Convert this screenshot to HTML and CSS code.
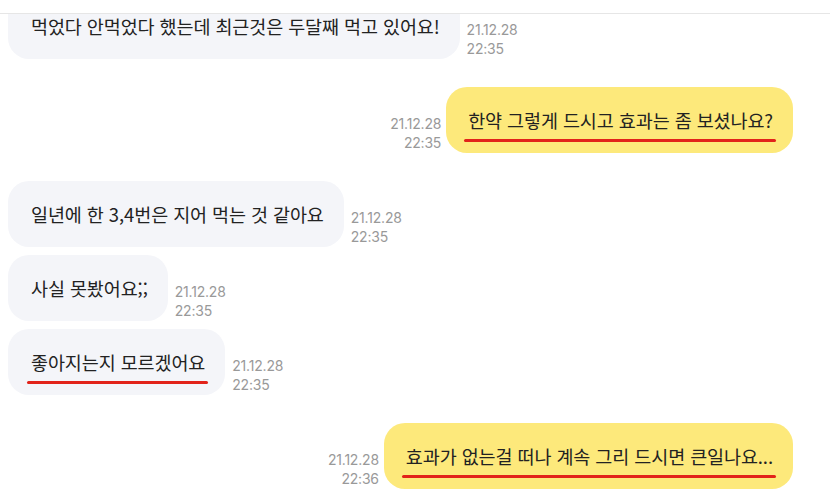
FILE: index.html
```html
<!DOCTYPE html>
<html lang="ko">
<head>
<meta charset="utf-8">
<link rel="stylesheet" href="styles.css">
</head>
<body>
<div class="topbar"></div>
<div class="chat">
  <div class="row left first">
    <div class="bubble gray">먹었다 안먹었다 했는데 최근것은 두달째 먹고 있어요!</div>
    <div class="time">21.12.28<br>22:35</div>
  </div>
  <div class="row right group">
    <div class="time">21.12.28<br>22:35</div>
    <div class="bubble yellow"><span class="mark">한약 그렇게 드시고 효과는 좀 보셨나요?</span></div>
  </div>
  <div class="row left group">
    <div class="bubble gray">일년에 한 3,4번은 지어 먹는 것 같아요</div>
    <div class="time">21.12.28<br>22:35</div>
  </div>
  <div class="row left">
    <div class="bubble gray">사실 못봤어요;;</div>
    <div class="time">21.12.28<br>22:35</div>
  </div>
  <div class="row left">
    <div class="bubble gray"><span class="mark">좋아지는지 모르겠어요</span></div>
    <div class="time">21.12.28<br>22:35</div>
  </div>
  <div class="row right group">
    <div class="time">21.12.28<br>22:36</div>
    <div class="bubble yellow"><span class="mark">효과가 없는걸 떠나 계속 그리 드시면 큰일나요...</span></div>
  </div>
</div>
</body>
</html>
```
FILE: styles.css
```css
html, body {
  margin: 0;
  padding: 0;
  background: #ffffff;
  width: 830px;
  height: 492px;
  overflow: hidden;
}
body {
  font-family: "Noto Sans CJK KR", "Noto Sans", sans-serif;
  color: #222222;
}
.topbar {
  height: 13px;
  border-bottom: 1px solid #e6e6e6;
  position: relative;
  z-index: 2;
  background: #fff;
}
.chat {
  padding: 0 37px 0 8px;
  display: flex;
  flex-direction: column;
  gap: 8px;
}
.row {
  display: flex;
  align-items: flex-end;
  gap: 7px;
}
.row.right {
  justify-content: flex-end;
  gap: 5px;
}
.row.first {
  margin-top: -21px;
}
.row.group {
  margin-top: 20px;
}
.bubble {
  height: 66px;
  box-sizing: border-box;
  display: flex;
  align-items: center;
  padding: 0 20px 0 23px;
  border-radius: 21px;
  font-size: 18.5px;
  letter-spacing: -0.1px;
  white-space: nowrap;
}
.gray {
  background: #f4f5f9;
}
.yellow {
  background: #fde97b;
  padding-left: 22px;
}
.mark {
  display: inline-block;
  position: relative;
}
.mark::after {
  content: "";
  position: absolute;
  left: -4px;
  right: -3px;
  bottom: -9px;
  height: 3px;
  border-radius: 2px;
  background: #e2231a;
}
.time {
  font-family: "Inter", "Liberation Sans", sans-serif;
  font-size: 14px;
  line-height: 19px;
  color: #999999;
  letter-spacing: -0.2px;
  padding-bottom: 1px;
}
.row.right .time {
  text-align: right;
}
```
